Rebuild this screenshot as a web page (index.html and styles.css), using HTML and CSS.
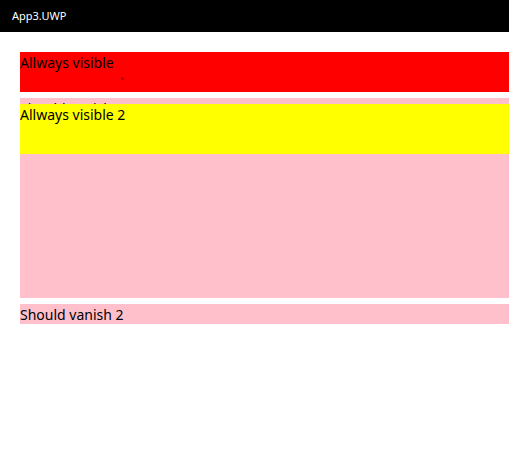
FILE: index.html
```html
<!DOCTYPE html>
<html>
<head>
<meta charset="utf-8">
<link rel="stylesheet" href="styles.css">
</head>
<body>
<div class="titlebar">App3.UWP</div>
<div class="content">
  <div class="box red">Allways visible<span class="dot"></span></div>
  <div class="box pink tall">Should vanish 1
    <div class="overlay yellow">Allways visible 2</div>
  </div>
  <div class="box pink short">Should vanish 2</div>
</div>
</body>
</html>
```
FILE: styles.css
```css
html, body {
  margin: 0;
  padding: 0;
  background: #fff;
  width: 509px;
  height: 468px;
  overflow: hidden;
}
.titlebar {
  height: 32px;
  background: #000;
  color: #fff;
  font-family: "Noto Sans", "Open Sans", sans-serif;
  font-size: 11px;
  line-height: 32px;
  padding-left: 12px;
}
.content {
  padding: 20px 0 0 20px;
  display: flex;
  flex-direction: column;
  gap: 6px;
}
.box {
  font-family: "Noto Sans", "Open Sans", sans-serif;
  font-size: 14px;
  line-height: 21px;
  color: #000;
  position: relative;
}
.red {
  background: #ff0000;
  height: 40px;
}
.pink {
  background: #ffc0cb;
}
.tall {
  height: 200px;
  overflow: hidden;
}
.short {
  height: 20px;
  overflow: hidden;
}
.overlay {
  position: absolute;
  left: 0;
  right: 0;
  top: 6px;
  height: 50px;
}
.yellow {
  background: #ffff00;
}
.dot {
  position: absolute;
  left: 101px;
  top: 25px;
  width: 3px;
  height: 3px;
  border-radius: 50%;
  background: #b00000;
}
```
